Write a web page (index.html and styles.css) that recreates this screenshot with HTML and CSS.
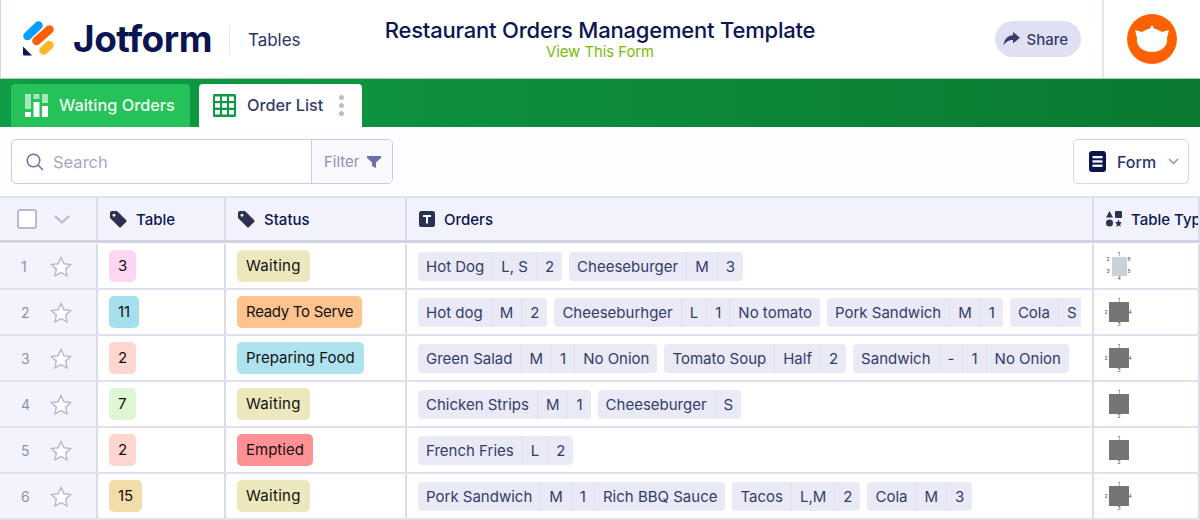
FILE: index.html
```html
<!DOCTYPE html>
<html lang="en">
<head>
  <meta charset="UTF-8">
  <title>Restaurant Orders Management Template</title>
  <link rel="stylesheet" href="styles.css">
</head>
<body>

  <header class="topbar">
    <div class="brand">
      <svg class="logo-mark" width="32" height="35" viewBox="0 0 32 35" fill="none" stroke-linecap="round" stroke-width="8.500">
        <path d="M4.500 15 L15.500 4.500" stroke="#0a9cff"/>
        <path d="M13.500 20 L26.500 8.500" stroke="#ff6100"/>
        <path d="M20.500 29.500 L26.500 24" stroke="#ffb629"/>
        <path d="M0 25.500 L9 34.500 H1.500 Q0 34.500 0 33 Z" fill="#0a1551" stroke="none"/>
      </svg>
      <span class="logo-text">Jotform</span>
      <span class="brand-sep"></span>
      <span class="brand-sub">Tables</span>
    </div>
    <div class="title-wrap">
      <h1>Restaurant Orders Management Template</h1>
      <a class="view-link">View This Form</a>
    </div>
    <div class="share-wrap">
      <button class="share-btn">
        <svg width="17" height="14" viewBox="0 0 17 14"><path d="M10 0 L17 5.700 L10 11.400 V8 C6 8 3 9.500 0.500 13.500 C1 8 4 3.600 10 3.200 Z" fill="#343c6a"/></svg>
        Share
      </button>
    </div>
    <div class="avatar-wrap">
      <svg width="50" height="50" viewBox="0 0 50 50">
        <circle cx="25" cy="25" r="25" fill="#ff6100"/>
        <path d="M8 16 L15 18 C18 16 20.500 15 23 14.500 L25 11 L27 14.500 C29.500 15 32 16 35 18 L42 16 L40 24 C41.500 32 34 38 25 38 C16 38 8.500 32 10 24 Z" fill="#fff"/>
      </svg>
    </div>
  </header>

  <nav class="tabbar">
    <div class="tab tab-green">
      <svg width="23" height="23" viewBox="0 0 23 23">
        <rect x="0" y="0" width="6" height="15" fill="#a8e6bd"/><rect x="0" y="18" width="6" height="5" fill="#fff"/>
        <rect x="8.500" y="0" width="6" height="5" fill="#a8e6bd"/><rect x="8.500" y="8" width="6" height="15" fill="#fff"/>
        <rect x="17" y="0" width="6" height="9" fill="#a8e6bd"/><rect x="17" y="12" width="6" height="11" fill="#fff"/>
      </svg>
      Waiting Orders
    </div>
    <div class="tab tab-white">
      <svg width="23" height="23" viewBox="0 0 23 23">
        <rect width="23" height="23" rx="1.500" fill="#0d9a42"/>
        <g fill="#fff">
          <rect x="2" y="2.500" width="5" height="4.500"/><rect x="9" y="2.500" width="5" height="4.500"/><rect x="16" y="2.500" width="5" height="4.500"/>
          <rect x="2" y="9.200" width="5" height="4.500"/><rect x="9" y="9.200" width="5" height="4.500"/><rect x="16" y="9.200" width="5" height="4.500"/>
          <rect x="2" y="16" width="5" height="4.500"/><rect x="9" y="16" width="5" height="4.500"/><rect x="16" y="16" width="5" height="4.500"/>
        </g>
      </svg>
      Order List
      <span class="tab-dots"><i></i><i></i><i></i></span>
    </div>
  </nav>

  <section class="toolbar">
    <div class="search-box">
      <div class="search-input">
        <svg width="18" height="18" viewBox="0 0 18 18" fill="none" stroke="#6c73a8" stroke-width="1.500"><circle cx="7.500" cy="7.500" r="6.300"/><path d="M12 12 L17 17"/></svg>
        Search
      </div>
      <div class="filter-btn">
        Filter
        <svg width="14" height="12" viewBox="0 0 14 12"><path d="M0 0 H14 V2 L9 6.500 V12 L5 10 V6.500 L0 2 Z" fill="#6c73a8"/></svg>
      </div>
    </div>
    <div class="form-btn">
      <svg width="17" height="21" viewBox="0 0 17 21"><rect width="17" height="21" rx="3" fill="#0a1551"/><g fill="#fff"><rect x="3.500" y="5" width="10" height="2.300"/><rect x="3.500" y="9.300" width="10" height="2.300"/><rect x="3.500" y="13.600" width="10" height="2.300"/></g></svg>
      Form
      <svg width="11" height="7" viewBox="0 0 11 7" fill="none" stroke="#8d92b3" stroke-width="1.500"><path d="M1 1 L5.500 5.500 L10 1"/></svg>
    </div>
  </section>

  <section class="grid">
    <div class="row head">
      <div class="cell lead">
        <span class="check"></span>
        <svg width="16" height="9" viewBox="0 0 16 9" fill="none" stroke="#b6bad2" stroke-width="2.200"><path d="M1 1 L8 7.500 L15 1"/></svg>
      </div>
      <div class="cell"><svg class="tag" width="17" height="17" viewBox="0 0 17 17"><path d="M0 2 Q0 0 2 0 H7 L16.300 9.300 Q17 10 16.300 10.800 L10.800 16.300 Q10 17 9.300 16.300 L0 7 Z M4 2.700 A1.500 1.500 0 1 0 4.010 2.700 Z" fill="#2b3150" fill-rule="evenodd"/></svg>Table</div>
      <div class="cell"><svg class="tag" width="17" height="17" viewBox="0 0 17 17"><path d="M0 2 Q0 0 2 0 H7 L16.300 9.300 Q17 10 16.300 10.800 L10.800 16.300 Q10 17 9.300 16.300 L0 7 Z M4 2.700 A1.500 1.500 0 1 0 4.010 2.700 Z" fill="#2b3150" fill-rule="evenodd"/></svg>Status</div>
      <div class="cell"><svg class="tag" width="16" height="16" viewBox="0 0 16 16"><rect width="16" height="16" rx="2.500" fill="#2b3150"/><path d="M4 4 H12 V6 H9 V12.500 H7 V6 H4 Z" fill="#fff"/></svg>Orders</div>
      <div class="cell"><svg class="tag" width="16" height="16" viewBox="0 0 16 16" fill="#2b3150"><path d="M3.500 0 L7 6.500 H0 Z"/><rect x="9" y="0" width="7" height="7" rx="1"/><circle cx="3.500" cy="12" r="3.500"/><path d="M12.500 8.500 L13.600 11 L16 11.300 L14.200 13 L14.700 15.800 L12.500 14.500 L10.300 15.800 L10.800 13 L9 11.300 L11.400 11 Z"/></svg>Table Typ</div>
    </div>

    <div class="row">
      <div class="cell lead"><span class="num">1</span><svg class="star" width="22" height="21" viewBox="0 0 22 21"><path d="M11 1.500 L13.900 7.700 L20.600 8.500 L15.700 13.100 L17 19.800 L11 16.500 L5 19.800 L6.300 13.100 L1.400 8.500 L8.100 7.700 Z"/></svg></div>
      <div class="cell"><span class="pill pink">3</span></div>
      <div class="cell"><span class="pill sand">Waiting</span></div>
      <div class="cell chips">
        <span class="chip"><b>Hot Dog</b><b>L, S</b><b>2</b></span>
        <span class="chip"><b>Cheeseburger</b><b>M</b><b>3</b></span>
      </div>
      <div class="cell"><svg class="seat" width="28" height="28" viewBox="0 0 28 28"><rect x="7" y="5" width="15" height="19" fill="#c9d2dc"/><g class="seat-no"><text x="14" y="4">1</text><text x="3" y="9">2</text><text x="3" y="21">3</text><text x="14" y="28">4</text><text x="24" y="21">5</text><text x="24" y="9">6</text></g></svg></div>
    </div>

    <div class="row">
      <div class="cell lead"><span class="num">2</span><svg class="star" width="22" height="21" viewBox="0 0 22 21"><path d="M11 1.500 L13.900 7.700 L20.600 8.500 L15.700 13.100 L17 19.800 L11 16.500 L5 19.800 L6.300 13.100 L1.400 8.500 L8.100 7.700 Z"/></svg></div>
      <div class="cell"><span class="pill blue">11</span></div>
      <div class="cell"><span class="pill orange">Ready To Serve</span></div>
      <div class="cell chips">
        <span class="chip"><b>Hot dog</b><b>M</b><b>2</b></span>
        <span class="chip"><b>Cheeseburhger</b><b>L</b><b>1</b><b>No tomato</b></span>
        <span class="chip"><b>Pork Sandwich</b><b>M</b><b>1</b></span>
        <span class="chip chip-cut"><b>Cola</b><b>S</b></span>
      </div>
      <div class="cell"><svg class="seat" width="28" height="28" viewBox="0 0 28 28"><rect x="4" y="4" width="20" height="20" fill="#757575"/><g class="seat-no"><text x="14" y="3.500">1</text><text x="1" y="15.500">2</text><text x="14" y="28">3</text><text x="25" y="15.500">4</text></g></svg></div>
    </div>

    <div class="row">
      <div class="cell lead"><span class="num">3</span><svg class="star" width="22" height="21" viewBox="0 0 22 21"><path d="M11 1.500 L13.900 7.700 L20.600 8.500 L15.700 13.100 L17 19.800 L11 16.500 L5 19.800 L6.300 13.100 L1.400 8.500 L8.100 7.700 Z"/></svg></div>
      <div class="cell"><span class="pill salmon">2</span></div>
      <div class="cell"><span class="pill sky">Preparing Food</span></div>
      <div class="cell chips">
        <span class="chip"><b>Green Salad</b><b>M</b><b>1</b><b>No Onion</b></span>
        <span class="chip"><b>Tomato Soup</b><b>Half</b><b>2</b></span>
        <span class="chip"><b>Sandwich</b><b>-</b><b>1</b><b>No Onion</b></span>
      </div>
      <div class="cell"><svg class="seat" width="28" height="28" viewBox="0 0 28 28"><rect x="4" y="4" width="20" height="20" fill="#757575"/><g class="seat-no"><text x="14" y="3.500">1</text><text x="1" y="15.500">2</text><text x="14" y="28">3</text><text x="25" y="15.500">4</text></g></svg></div>
    </div>

    <div class="row">
      <div class="cell lead"><span class="num">4</span><svg class="star" width="22" height="21" viewBox="0 0 22 21"><path d="M11 1.500 L13.900 7.700 L20.600 8.500 L15.700 13.100 L17 19.800 L11 16.500 L5 19.800 L6.300 13.100 L1.400 8.500 L8.100 7.700 Z"/></svg></div>
      <div class="cell"><span class="pill green">7</span></div>
      <div class="cell"><span class="pill sand">Waiting</span></div>
      <div class="cell chips">
        <span class="chip"><b>Chicken Strips</b><b>M</b><b>1</b></span>
        <span class="chip"><b>Cheeseburger</b><b>S</b></span>
      </div>
      <div class="cell"><svg class="seat" width="28" height="28" viewBox="0 0 28 28"><rect x="4" y="4" width="20" height="20" fill="#757575"/><g class="seat-no"><text x="14" y="3.500">1</text><text x="14" y="28">2</text></g></svg></div>
    </div>

    <div class="row">
      <div class="cell lead"><span class="num">5</span><svg class="star" width="22" height="21" viewBox="0 0 22 21"><path d="M11 1.500 L13.900 7.700 L20.600 8.500 L15.700 13.100 L17 19.800 L11 16.500 L5 19.800 L6.300 13.100 L1.400 8.500 L8.100 7.700 Z"/></svg></div>
      <div class="cell"><span class="pill salmon">2</span></div>
      <div class="cell"><span class="pill red">Emptied</span></div>
      <div class="cell chips">
        <span class="chip"><b>French Fries</b><b>L</b><b>2</b></span>
      </div>
      <div class="cell"><svg class="seat" width="28" height="28" viewBox="0 0 28 28"><rect x="4" y="4" width="20" height="20" fill="#757575"/><g class="seat-no"><text x="14" y="3.500">1</text><text x="14" y="28">2</text></g></svg></div>
    </div>

    <div class="row">
      <div class="cell lead"><span class="num">6</span><svg class="star" width="22" height="21" viewBox="0 0 22 21"><path d="M11 1.500 L13.900 7.700 L20.600 8.500 L15.700 13.100 L17 19.800 L11 16.500 L5 19.800 L6.300 13.100 L1.400 8.500 L8.100 7.700 Z"/></svg></div>
      <div class="cell"><span class="pill tan">15</span></div>
      <div class="cell"><span class="pill sand">Waiting</span></div>
      <div class="cell chips">
        <span class="chip"><b>Pork Sandwich</b><b>M</b><b>1</b><b>Rich BBQ Sauce</b></span>
        <span class="chip"><b>Tacos</b><b>L,M</b><b>2</b></span>
        <span class="chip"><b>Cola</b><b>M</b><b>3</b></span>
      </div>
      <div class="cell"><svg class="seat" width="28" height="28" viewBox="0 0 28 28"><rect x="4" y="4" width="20" height="20" fill="#757575"/><g class="seat-no"><text x="14" y="3.500">1</text><text x="1" y="15.500">2</text><text x="14" y="28">3</text><text x="25" y="15.500">4</text></g></svg></div>
    </div>
  </section>

</body>
</html>
```

FILE: styles.css
```css
html, body {
  margin: 0;
  padding: 0;
}

body {
  width: 1200px;
  height: 520px;
  overflow: hidden;
  font-family: "Inter", "Liberation Sans", sans-serif;
  font-size: 15px;
  color: #0a1551;
  background-color: #fff;
}

/* top bar */
.topbar {
  display: flex;
  height: 78px;
  border-left: 1px solid #d5d7ea;
  border-bottom: 1px solid #a9cfb5;
  background-color: #fff;
}

.brand {
  display: flex;
  align-items: center;
  width: 374px;
  padding-left: 22px;
  padding-bottom: 2px;
  box-sizing: border-box;
}

.logo-text {
  margin-left: 18px;
  font-size: 37px;
  font-weight: 700;
  letter-spacing: -0.5px;
}

.brand-sep {
  width: 1px;
  height: 26px;
  margin: 4px 18px 0 17px;
  background-color: #e3e5f2;
}

.brand-sub {
  margin-top: 4px;
  font-size: 17px;
  color: #2b3468;
}

.title-wrap {
  width: 450px;
  padding-top: 17px;
  text-align: center;
}

.title-wrap h1 {
  margin: 0;
  font-size: 22px;
  font-weight: 500;
  line-height: 26px;
  letter-spacing: -0.2px;
}

.view-link {
  display: block;
  font-size: 14.800px;
  line-height: 18px;
  color: #78bb07;
}

.share-wrap {
  display: flex;
  align-items: center;
  justify-content: flex-end;
  width: 279px;
  padding-right: 21px;
  box-sizing: border-box;
  border-right: 2px solid #e3e5f2;
}

.share-btn {
  display: flex;
  align-items: center;
  gap: 6px;
  height: 36px;
  padding: 0 13px 0 8px;
  border: none;
  border-radius: 18px;
  font-family: inherit;
  font-size: 15px;
  font-weight: 500;
  color: #343c6a;
  background-color: #dfe1f2;
}

.avatar-wrap {
  display: flex;
  flex: 1;
  align-items: center;
  justify-content: center;
  padding-bottom: 1px;
}

/* tabs */
.tabbar {
  display: flex;
  align-items: flex-end;
  gap: 9px;
  height: 48px;
  padding-left: 11px;
  background: linear-gradient(90deg, #0f9d45, #0a7a30);
}

.tab {
  display: flex;
  align-items: center;
  height: 43px;
  padding-bottom: 1px;
  box-sizing: border-box;
  border-radius: 4px 4px 0 0;
  font-size: 16.300px;
  font-weight: 500;
}

.tab-green {
  gap: 11px;
  width: 179px;
  padding-left: 14px;
  color: #eafff1;
  background-color: #27c15a;
}

.tab-white {
  gap: 11px;
  width: 163px;
  padding-left: 14px;
  color: #343c6a;
  background-color: #fff;
}

.tab-dots {
  display: flex;
  flex-direction: column;
  gap: 3px;
  margin-left: 5px;
}

.tab-dots i {
  width: 5px;
  height: 5px;
  border-radius: 50%;
  background-color: #b8bcd6;
}

/* search row */
.toolbar {
  display: flex;
  align-items: center;
  justify-content: space-between;
  height: 69px;
  padding: 0 11px;
  background-color: #fdfdff;
}

.search-box {
  display: flex;
  width: 382px;
  height: 45px;
  box-sizing: border-box;
  border: 1px solid #c8ccdf;
  border-radius: 5px;
  overflow: hidden;
  background-color: #fff;
}

.search-input {
  display: flex;
  flex: 1;
  align-items: center;
  gap: 9px;
  padding-left: 14px;
  font-size: 16.500px;
  color: #a4a8c6;
}

.filter-btn {
  display: flex;
  align-items: center;
  gap: 7px;
  width: 81px;
  box-sizing: border-box;
  padding-left: 12px;
  border-left: 1px solid #c8ccdf;
  font-size: 15px;
  color: #8d92b3;
  background-color: #f9f9fd;
}

.form-btn {
  display: flex;
  align-items: center;
  gap: 11px;
  width: 116px;
  height: 45px;
  box-sizing: border-box;
  padding-left: 15px;
  border: 1px solid #d3d6e8;
  border-radius: 5px;
  font-size: 16px;
  font-weight: 500;
  color: #2b3468;
  background-color: #fff;
}

.form-btn svg:last-child {
  margin-left: 1px;
}

/* table */
.grid {
  display: grid;
  grid-auto-rows: 46px;
  border-top: 2px solid #dfe1ee;
  box-sizing: border-box;
}

.row {
  display: grid;
  grid-template-columns: 98px 128px 181px 687px 106px;
  border-bottom: 2px solid #dfe1ee;
  box-sizing: border-box;
}

.row.head {
  height: 45px;
  border-bottom: 3px solid #ced2e2;
  font-size: 15px;
  font-weight: 500;
  background-color: #f1f2fb;
}

.cell {
  display: flex;
  align-items: center;
  min-width: 0;
  padding-left: 11px;
  box-sizing: border-box;
  border-right: 2px solid #d9dcea;
  overflow: hidden;
  white-space: nowrap;
}

.head .cell {
  padding-left: 12px;
}

.tag {
  flex: none;
  margin-right: 9px;
}

.lead {
  background-color: #f3f3fd;
}

.head .lead {
  gap: 17px;
  padding-left: 17px;
}

.check {
  width: 16px;
  height: 16px;
  border: 2px solid #b6bad2;
  border-radius: 3px;
  background-color: #fff;
}

.num {
  width: 28px;
  padding-left: 10px;
  box-sizing: border-box;
  font-size: 14px;
  color: #8d92b3;
}

.star {
  margin-left: 11px;
  fill: #fff;
  stroke: #b6bad2;
  stroke-width: 1.500;
}

.pill {
  display: inline-block;
  padding: 0 9px;
  height: 32px;
  line-height: 32px;
  border-radius: 5px;
  color: #111;
}

.pink { background-color: #fdd7f2; }
.blue { background-color: #a6e0ec; }
.salmon { background-color: #ffd6cf; }
.green { background-color: #dcf7d2; }
.tan { background-color: #f2dda9; }
.sand { background-color: #ece7bd; letter-spacing: 0.3px; }
.orange { background-color: #ffc38f; letter-spacing: -0.3px; }
.sky { background-color: #aee2ef; }
.red { background-color: #ff9093; }

.chips {
  gap: 7px;
}

.chip {
  display: flex;
  flex: none;
  height: 29px;
  border-radius: 4px;
  font-size: 15px;
  color: #343c6a;
  background-color: #e9eaf5;
}

.chip b {
  padding: 0 8px;
  font-weight: 400;
  line-height: 29px;
  border-left: 1px solid #dfe1f0;
}

.chip b:first-child {
  border-left: none;
}

.chip-cut {
  width: 71px;
  overflow: hidden;
  border-radius: 4px 0 0 4px;
}

.seat {
  flex: none;
}

.seat-no {
  font-size: 5px;
  fill: #444;
  text-anchor: middle;
}
```
